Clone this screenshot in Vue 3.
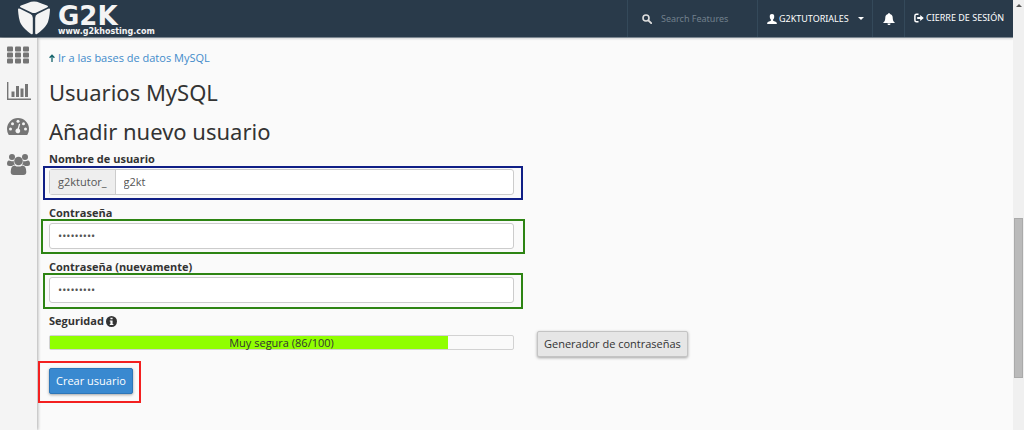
<script setup>
import { ref } from 'vue'

const search = ref('')
const username = ref('g2kt')
const password = ref('abcdefghi')
const passwordAgain = ref('abcdefghi')
const strength = 86
</script>

<template>
  <div class="window">
    <div class="page">
      <header class="topbar">
        <a href="#" class="brand">
          <svg class="cube" viewBox="0 0 32 34" aria-hidden="true">
            <path d="M3 4.500Q9 2.500 13 .8 16 0 19 .8 23 2.500 29 4.500 31 5.500 29 6.500L18.500 11.500Q16 12.600 13.500 11.500L3 6.500Q1 5.500 3 4.500Z" />
            <path d="M0 8.500Q0 7 2 7.800L12.500 13Q14.800 14.200 14.800 17V32Q14.800 34 13 33 6 28 3 23 .6 19 0 8.500Z" />
            <path d="M32 8.500Q32 7 30 7.800L19.500 13Q17.200 14.200 17.200 17V32Q17.200 34 19 33 26 28 29 23 31.400 19 32 8.500Z" />
          </svg>
          <span class="wordmark">
            <span class="name">G2K</span>
            <span class="site">www.g2khosting.com</span>
          </span>
        </a>
        <nav class="tools">
          <label class="search">
            <svg viewBox="0 0 10 10" class="i-search" aria-hidden="true">
              <circle cx="4" cy="4" r="3" fill="none" stroke="currentColor" stroke-width="1.6" />
              <path d="M6.3 6.3 9.2 9.2" stroke="currentColor" stroke-width="1.9" stroke-linecap="round" />
            </svg>
            <input v-model="search" type="text" placeholder="Search Features" aria-label="Search Features" />
          </label>
          <button type="button" class="user">
            <svg viewBox="0 0 10 10" class="i-user" aria-hidden="true">
              <path d="M5 0C3.2 0 2.6 1.3 2.8 3c.1 1.3.6 2.2 1.2 2.8v.8C3.600 7.300.4 7.600.2 8.900V10h9.600V8.900C9.600 7.600 6.400 7.300 6 6.600v-.8C6.600 5.200 7.100 4.300 7.200 3 7.400 1.300 6.800 0 5 0Z" fill="currentColor" />
            </svg>
            <span>G2KTUTORIALES</span>
            <i class="caret"></i>
          </button>
          <button type="button" class="bell" aria-label="Notificaciones">
            <svg viewBox="0 0 12 12" aria-hidden="true">
              <path d="M6 0c.6 0 .9.400.9.900C8.700 1.300 9.700 2.700 9.700 4.500c0 2.800.7 4 2 5.000v.5H.3v-.5c1.300-1 2-2.200 2-5C2.300 2.700 3.300 1.300 5.100.9 5.100.4 5.400 0 6 0ZM4.500 10.400h3C7.500 11.400 6.900 12 6 12s-1.500-.6-1.500-1.600Z" fill="currentColor" />
            </svg>
          </button>
          <a href="#" class="logout">
            <svg viewBox="0 0 10 10" aria-hidden="true">
              <path d="M4.500 1.300H2.400Q.9 1.300.9 2.800v4.400q0 1.500 1.500 1.500h2.100" fill="none" stroke="currentColor" stroke-width="1.500" />
              <path d="M3.200 3.900h3V1.900L9.800 5 6.200 8.100v-2h-3Z" fill="currentColor" />
            </svg>
            <span>CIERRE DE SESIÓN</span>
          </a>
        </nav>
      </header>

      <div class="body">
        <aside class="sidebar">
          <a href="#" aria-label="Inicio">
            <svg viewBox="0 0 22 18" class="i-grid" aria-hidden="true">
              <template v-for="y in 3" :key="y">
                <rect v-for="x in 3" :key="x" :x="(x - 1) * 8" :y="(y - 1) * 6 + 0.5" width="6" height="5" rx="1" />
              </template>
            </svg>
          </a>
          <a href="#" aria-label="Estadísticas">
            <svg viewBox="0 0 24 18" class="i-chart" aria-hidden="true">
              <path d="M0 0h1.400v16.600H24V18H0ZM4.500 9.500h3V15h-3ZM9 4h3v11H9ZM13.500 6.500h3V15h-3ZM18 2h3v13h-3Z" />
            </svg>
          </a>
          <a href="#" aria-label="Panel">
            <svg viewBox="0 0 22 17" class="i-gauge" aria-hidden="true">
              <path d="M11 0a11 11 0 0 0-11 11q0 3 1.500 5.500.3.500.8.500h17.400q.5 0 .8-.5Q22 14 22 11A11 11 0 0 0 11 0Z" />
              <g fill="#f4f4f4">
                <circle cx="3.500" cy="11" r="1.500" />
                <circle cx="5.500" cy="5.800" r="1.500" />
                <circle cx="11" cy="3.300" r="1.500" />
                <circle cx="16.500" cy="5.800" r="1.500" />
                <circle cx="18.500" cy="11" r="1.500" />
                <path d="m12 5.800 1.200.3-1.200 4.700a2.400 2.400 0 1 1-1.400-.3Z" />
              </g>
            </svg>
          </a>
          <a href="#" aria-label="Usuarios">
            <svg viewBox="0 0 23 21" class="i-users" aria-hidden="true">
              <circle cx="5" cy="3" r="3" />
              <circle cx="18" cy="3" r="3" />
              <path d="M2 6.500q3 1.500 4.600.3Q6.500 9 8 10.500 6 10.500 5 12H2.300Q0 12 0 10 0 6.500 2 6.500ZM21 6.500q-3 1.500-4.600.3.100 2.200-1.400 3.700 2 0 3 1.500h2.700Q23 12 23 10q0-3.500-2-3.500Z" />
              <circle cx="11.500" cy="7" r="4.300" />
              <path d="M7.600 11.400q3.900 2.400 7.800 0Q19.300 11.500 19.300 18q0 3-3 3H6.700q-3 0-3-3 0-6.500 3.900-6.600Z" />
            </svg>
          </a>
        </aside>

        <main class="content">
          <a href="#" class="back">
            <svg viewBox="0 0 6 8" aria-hidden="true">
              <path d="M3 8V1.200M.6 3.800 3 1.200l2.400 2.600" fill="none" stroke="currentColor" stroke-width="1.300" />
            </svg>
            <span>Ir a las bases de datos MySQL</span>
          </a>
          <h1>Usuarios MySQL</h1>
          <h2>Añadir nuevo usuario</h2>

          <form class="form" @submit.prevent>
            <div class="field">
              <label for="username">Nombre de usuario</label>
              <div class="control mark-blue">
                <span class="prefix">g2ktutor_</span>
                <input id="username" v-model="username" type="text" />
              </div>
            </div>
            <div class="field">
              <label for="password">Contraseña</label>
              <div class="control mark-green wide">
                <input id="password" v-model="password" type="password" />
              </div>
            </div>
            <div class="field">
              <label for="password-again">Contraseña (nuevamente)</label>
              <div class="control mark-green">
                <input id="password-again" v-model="passwordAgain" type="password" />
              </div>
            </div>
            <div class="caption">
              <span id="strength-label">Seguridad</span>
              <svg viewBox="0 0 10 10" aria-hidden="true">
                <circle cx="5" cy="5" r="5" fill="currentColor" />
                <path d="M4 1.500h2v1.500H4ZM3.400 4H6v3.200h.7v1H3.400v-1H4V5h-.6Z" fill="#fafafa" />
              </svg>
            </div>
            <div class="meter" role="progressbar" aria-labelledby="strength-label" :aria-valuenow="strength" aria-valuemin="0" aria-valuemax="100">
              <div class="fill" :style="{ width: strength + '%' }"></div>
              <span>Muy segura ({{ strength }}/100)</span>
            </div>
            <div class="generate">
              <button type="button" class="btn">Generador de contraseñas</button>
            </div>
            <div class="submit">
              <button type="submit" class="btn primary">Crear usuario</button>
            </div>
          </form>
        </main>
      </div>
    </div>
    <div class="scroll" aria-hidden="true">
      <i class="up"></i>
      <i class="thumb"></i>
    </div>
  </div>
</template>

<style>
body {
  background: #fafafa;
}
</style>

<style scoped>
* {
  box-sizing: border-box;
}
.window {
  display: grid;
  grid-template-columns: 1fr 11px;
  min-height: 100vh;
  font: 11px/16px "Open Sans", "Noto Sans", sans-serif;
  color: #333;
  background: #fafafa;
}
button,
input {
  font: inherit;
  color: inherit;
}
a {
  text-decoration: none;
}
svg {
  display: block;
  flex: none;
}
.page {
  display: flex;
  flex-direction: column;
}
.topbar {
  display: flex;
  justify-content: space-between;
  height: 38px;
  background: #293a4a;
  border-bottom: 1px solid #7c8791;
  box-shadow: 0 1px 2px rgba(0, 0, 0, 0.15);
  color: #fff;
}
.brand {
  display: flex;
  align-items: flex-start;
  gap: 8px;
  padding: 1px 0 0 18px;
  color: #f4f4f4;
}
.cube {
  width: 32px;
  height: 34px;
  fill: #f4f4f4;
}
.wordmark {
  display: flex;
  flex-direction: column;
  padding-top: 2px;
  font-family: "DejaVu Sans", sans-serif;
  font-weight: bold;
}
.name {
  font-size: 26px;
  line-height: 26px;
}
.site {
  font-size: 8px;
  line-height: 6px;
}
.tools {
  display: flex;
}
.tools > * {
  display: flex;
  align-items: center;
  border: 0;
  border-left: 1px solid #34495a;
  background: none;
  color: #fff;
  font-family: "Noto Sans", "Open Sans", sans-serif;
  font-size: 9px;
}
.search {
  width: 130px;
  gap: 9px;
  padding-left: 14px;
}
.i-search {
  width: 10px;
  height: 10px;
  color: #ddd;
}
.search input {
  width: 90px;
  padding: 0;
  border: 0;
  background: none;
  outline: 0;
}
.search input::placeholder {
  color: #72808c;
  opacity: 1;
}
.user {
  width: 115px;
  gap: 2px;
  padding: 0 9px;
}
.i-user {
  width: 10px;
  height: 10px;
}
.caret {
  margin-left: 7px;
  border: 3px solid transparent;
  border-top-color: #fff;
  border-bottom: 0;
}
.bell {
  width: 32px;
  justify-content: center;
  padding: 0;
}
.bell svg {
  width: 12px;
  height: 12px;
}
.logout {
  width: 109px;
  gap: 2px;
  padding: 0 0 2px 9px;
}
.logout svg {
  width: 10px;
  height: 10px;
}
.body {
  display: flex;
  flex: 1;
}
.sidebar {
  display: flex;
  flex-direction: column;
  align-items: flex-start;
  gap: 16px;
  width: 37px;
  padding: 8px 0 0 7px;
  background: #f4f4f4;
  box-shadow: 1px 0 3px rgba(0, 0, 0, 0.3);
}
.sidebar svg {
  fill: #757575;
}
.i-grid {
  width: 22px;
  height: 18px;
}
.i-chart {
  width: 24px;
  height: 18px;
}
.sidebar a {
  height: 20px;
}
.i-gauge {
  width: 22px;
  height: 17px;
}
.i-users {
  width: 23px;
  height: 21px;
}
.content {
  flex: 1;
}
.back {
  display: flex;
  align-items: center;
  gap: 3px;
  padding: 12px 12px 0;
  color: #428bca;
}
.back svg {
  width: 6px;
  height: 8px;
  color: #14636b;
}
h1,
h2 {
  margin: 0;
  padding: 0 12px;
  font-family: "Noto Sans", "Open Sans", sans-serif;
  font-size: 22px;
  line-height: 26px;
  font-weight: 400;
}
h1 {
  margin-top: 13px;
}
h2 {
  margin: 13px 0 7px;
}
.form {
  display: grid;
  grid-template-columns: 1fr 1fr;
}
.form > * {
  grid-column: 1;
  margin-left: 12px;
  margin-right: 11px;
}
.field {
  margin-bottom: 10px;
}
.field label,
.caption {
  display: block;
  font-weight: 700;
}
.control {
  position: relative;
  display: flex;
  height: 26px;
  margin-top: 2px;
  border: 1px solid #ccc;
  border-radius: 3px;
  background: #fff;
  color: #555;
}
.control::after {
  content: "";
  position: absolute;
  inset: -5px -10px -7px -7px;
  border: 2px solid #2d8413;
  pointer-events: none;
}
.control.mark-blue::after {
  inset: -4px -10px -6px -7px;
  border-color: #101f86;
}
.control.wide::after {
  inset: -5px -12px -6px -9px;
}
.control input {
  flex: 1;
  min-width: 0;
  padding: 0 8px;
  border: 0;
  outline: 0;
  background: none;
}
.prefix {
  padding: 4px 8px;
  border-right: 1px solid #ccc;
  background: #eee;
}
.caption {
  display: flex;
  align-items: center;
  gap: 2px;
}
.caption svg {
  width: 11px;
  height: 11px;
}
.meter {
  position: relative;
  height: 15px;
  margin-top: 6px;
  border: 1px solid #d2d2d2;
  border-radius: 2px;
  text-align: center;
  line-height: 14px;
}
.fill {
  position: absolute;
  inset: 0 auto 0 0;
  background: #90ff00;
}
.meter span {
  position: relative;
}
.form .generate {
  grid-column: 2;
  margin: 2px 12px 0;
}
.btn {
  height: 26px;
  padding: 0 6px;
  border: 1px solid #c4c4c4;
  border-radius: 2px;
  background: #e6e6e6;
  box-shadow: 0 1px 3px rgba(0, 0, 0, 0.35);
}
.btn.primary {
  border-color: #2d76b8;
  background: #3989d0;
  color: #fff;
}
.submit {
  position: relative;
  justify-self: start;
  margin-top: 11px;
}
.submit::after {
  content: "";
  position: absolute;
  inset: -7px -8px -9px -11px;
  border: 2px solid #f32020;
  pointer-events: none;
}
.scroll {
  display: grid;
  grid-template-rows: 218fr 160fr 52fr;
  background: #f0f0f0;
}
.up {
  justify-self: center;
  align-self: start;
  margin-top: 4px;
  border: 3px solid transparent;
  border-bottom-color: #555;
  border-top: 0;
}
.thumb {
  margin: 0 1px;
  border: 1px solid #aaa;
  background: #bababa;
}
</style>
